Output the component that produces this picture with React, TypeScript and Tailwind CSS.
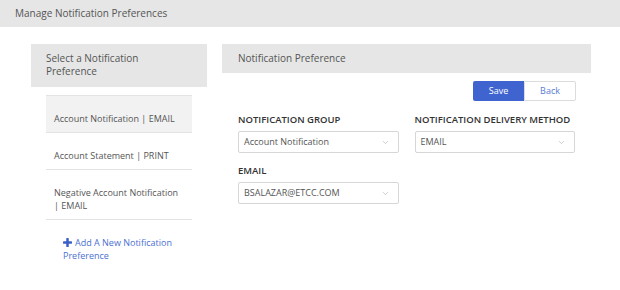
import { ChevronDown } from 'lucide-react';

const items = [
  { label: 'Account Notification | EMAIL', active: true },
  { label: 'Account Statement | PRINT', active: false },
  { label: 'Negative Account Notification | EMAIL', active: false },
];

const Field = ({ label, value }: { label: string; value: string }) => (
  <div className="flex flex-col">
    <span className="text-[9.5px] font-semibold leading-[12px] text-[#333]">{label}</span>
    <div className="mt-[5px] flex h-[22px] items-center justify-between rounded-[2px] border border-[#d6d6d6] bg-white pl-[5px] pr-[8px]">
      <span className="text-[9px] text-[#555]">{value}</span>
      <ChevronDown className="h-[9px] w-[9px] text-[#aaa]" strokeWidth={1.5} />
    </div>
  </div>
);

export default function App() {
  return (
    <div className="h-[290px] w-[620px] bg-white font-['Open_Sans',sans-serif] text-[#555]">
      <div className="flex h-[27px] items-center bg-[#e6e6e6] px-[15px] text-[10px]">
        Manage Notification Preferences
      </div>
      <div className="mt-[17px] flex gap-[15px] pl-[31px]">
        <div className="w-[176px]">
          <div className="h-[43px] bg-[#e6e6e6] pl-[15px] pr-[40px] pt-[8px] text-[10px] leading-[13px]">
            Select a Notification Preference
          </div>
          <ul className="mx-[15px] mt-[8px] border-t border-[#e3e3e3]">
            {items.map(item => (
              <li
                key={item.label}
                className={`border-b border-[#e3e3e3] px-[8px] pb-[7px] pt-[16px] text-[9px] leading-[13px] ${item.active ? 'bg-[#f2f2f2]' : ''}`}
              >
                {item.label}
              </li>
            ))}
          </ul>
          <div className="mx-[15px] mt-[16px] pl-[17px] text-[9px] leading-[13px] text-[#4c70d2]">
            <svg viewBox="0 0 10 10" className="mr-[3px] inline-block h-[9px] w-[9px] align-[-1px]" fill="#3b5fc8">
              <rect x="3.6" y="0" width="2.8" height="10" rx="0.5" />
              <rect x="0" y="3.6" width="10" height="2.8" rx="0.5" />
            </svg>
            Add A New Notification Preference
          </div>
        </div>
        <div className="w-[369px]">
          <div className="flex h-[29px] items-center bg-[#e6e6e6] px-[16px] text-[10px]">
            Notification Preference
          </div>
          <div className="mt-[8px] flex justify-end pr-[15px]">
            <button className="h-[20px] w-[51px] rounded-l-[2px] bg-[#3f63cf] text-[9px] text-white">Save</button>
            <button className="h-[20px] w-[52px] rounded-r-[2px] border border-[#dcdcdc] bg-white text-[9px] text-[#5a7bd4]">
              Back
            </button>
          </div>
          <div className="mt-[13px] grid grid-cols-2 gap-x-[16px] gap-y-[12px] px-[16px]">
            <Field label="NOTIFICATION GROUP" value="Account Notification" />
            <Field label="NOTIFICATION DELIVERY METHOD" value="EMAIL" />
            <Field label="EMAIL" value="BSALAZAR@ETCC.COM" />
          </div>
        </div>
      </div>
    </div>
  );
}
